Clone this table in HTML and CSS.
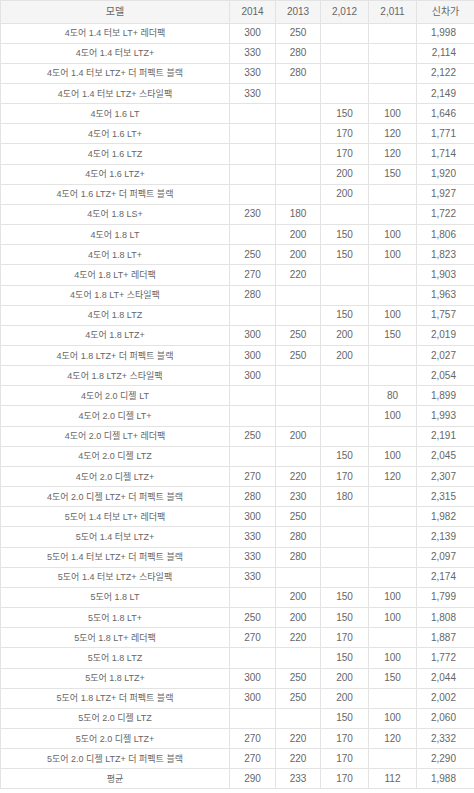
FILE: index.html
```
<!DOCTYPE html>
<html lang="ko">
<head>
<meta charset="utf-8">
<title>가격표</title>
<link rel="stylesheet" href="styles.css">
</head>
<body>
<table class="price-table">
<colgroup>
<col class="c-model"><col class="c-y"><col class="c-y2"><col class="c-y3"><col class="c-y3"><col class="c-new">
</colgroup>
<thead>
<tr><th>모델</th><th>2014</th><th>2013</th><th>2,012</th><th>2,011</th><th>신차가</th></tr>
</thead>
<tbody>
<tr><td class="model">4도어 1.4 터보 LT+ 레더팩</td><td>300</td><td>250</td><td></td><td></td><td class="num">1,998</td></tr>
<tr><td class="model">4도어 1.4 터보 LTZ+</td><td>330</td><td>280</td><td></td><td></td><td class="num">2,114</td></tr>
<tr><td class="model">4도어 1.4 터보 LTZ+ 더 퍼펙트 블랙</td><td>330</td><td>280</td><td></td><td></td><td class="num">2,122</td></tr>
<tr><td class="model">4도어 1.4 터보 LTZ+ 스타일팩</td><td>330</td><td></td><td></td><td></td><td class="num">2,149</td></tr>
<tr><td class="model">4도어 1.6 LT</td><td></td><td></td><td>150</td><td>100</td><td class="num">1,646</td></tr>
<tr><td class="model">4도어 1.6 LT+</td><td></td><td></td><td>170</td><td>120</td><td class="num">1,771</td></tr>
<tr><td class="model">4도어 1.6 LTZ</td><td></td><td></td><td>170</td><td>120</td><td class="num">1,714</td></tr>
<tr><td class="model">4도어 1.6 LTZ+</td><td></td><td></td><td>200</td><td>150</td><td class="num">1,920</td></tr>
<tr><td class="model">4도어 1.6 LTZ+ 더 퍼펙트 블랙</td><td></td><td></td><td>200</td><td></td><td class="num">1,927</td></tr>
<tr><td class="model">4도어 1.8 LS+</td><td>230</td><td>180</td><td></td><td></td><td class="num">1,722</td></tr>
<tr><td class="model">4도어 1.8 LT</td><td></td><td>200</td><td>150</td><td>100</td><td class="num">1,806</td></tr>
<tr><td class="model">4도어 1.8 LT+</td><td>250</td><td>200</td><td>150</td><td>100</td><td class="num">1,823</td></tr>
<tr><td class="model">4도어 1.8 LT+ 레더팩</td><td>270</td><td>220</td><td></td><td></td><td class="num">1,903</td></tr>
<tr><td class="model">4도어 1.8 LT+ 스타일팩</td><td>280</td><td></td><td></td><td></td><td class="num">1,963</td></tr>
<tr><td class="model">4도어 1.8 LTZ</td><td></td><td></td><td>150</td><td>100</td><td class="num">1,757</td></tr>
<tr><td class="model">4도어 1.8 LTZ+</td><td>300</td><td>250</td><td>200</td><td>150</td><td class="num">2,019</td></tr>
<tr><td class="model">4도어 1.8 LTZ+ 더 퍼펙트 블랙</td><td>300</td><td>250</td><td>200</td><td></td><td class="num">2,027</td></tr>
<tr><td class="model">4도어 1.8 LTZ+ 스타일팩</td><td>300</td><td></td><td></td><td></td><td class="num">2,054</td></tr>
<tr><td class="model">4도어 2.0 디젤 LT</td><td></td><td></td><td></td><td>80</td><td class="num">1,899</td></tr>
<tr><td class="model">4도어 2.0 디젤 LT+</td><td></td><td></td><td></td><td>100</td><td class="num">1,993</td></tr>
<tr><td class="model">4도어 2.0 디젤 LT+ 레더팩</td><td>250</td><td>200</td><td></td><td></td><td class="num">2,191</td></tr>
<tr><td class="model">4도어 2.0 디젤 LTZ</td><td></td><td></td><td>150</td><td>100</td><td class="num">2,045</td></tr>
<tr><td class="model">4도어 2.0 디젤 LTZ+</td><td>270</td><td>220</td><td>170</td><td>120</td><td class="num">2,307</td></tr>
<tr><td class="model">4도어 2.0 디젤 LTZ+ 더 퍼펙트 블랙</td><td>280</td><td>230</td><td>180</td><td></td><td class="num">2,315</td></tr>
<tr><td class="model">5도어 1.4 터보 LT+ 레더팩</td><td>300</td><td>250</td><td></td><td></td><td class="num">1,982</td></tr>
<tr><td class="model">5도어 1.4 터보 LTZ+</td><td>330</td><td>280</td><td></td><td></td><td class="num">2,139</td></tr>
<tr><td class="model">5도어 1.4 터보 LTZ+ 더 퍼펙트 블랙</td><td>330</td><td>280</td><td></td><td></td><td class="num">2,097</td></tr>
<tr><td class="model">5도어 1.4 터보 LTZ+ 스타일팩</td><td>330</td><td></td><td></td><td></td><td class="num">2,174</td></tr>
<tr><td class="model">5도어 1.8 LT</td><td></td><td>200</td><td>150</td><td>100</td><td class="num">1,799</td></tr>
<tr><td class="model">5도어 1.8 LT+</td><td>250</td><td>200</td><td>150</td><td>100</td><td class="num">1,808</td></tr>
<tr><td class="model">5도어 1.8 LT+ 레더팩</td><td>270</td><td>220</td><td>170</td><td></td><td class="num">1,887</td></tr>
<tr><td class="model">5도어 1.8 LTZ</td><td></td><td></td><td>150</td><td>100</td><td class="num">1,772</td></tr>
<tr><td class="model">5도어 1.8 LTZ+</td><td>300</td><td>250</td><td>200</td><td>150</td><td class="num">2,044</td></tr>
<tr><td class="model">5도어 1.8 LTZ+ 더 퍼펙트 블랙</td><td>300</td><td>250</td><td>200</td><td></td><td class="num">2,002</td></tr>
<tr><td class="model">5도어 2.0 디젤 LTZ</td><td></td><td></td><td>150</td><td>100</td><td class="num">2,060</td></tr>
<tr><td class="model">5도어 2.0 디젤 LTZ+</td><td>270</td><td>220</td><td>170</td><td>120</td><td class="num">2,332</td></tr>
<tr><td class="model">5도어 2.0 디젤 LTZ+ 더 퍼펙트 블랙</td><td>270</td><td>220</td><td>170</td><td></td><td class="num">2,290</td></tr>
<tr><td class="model">평균</td><td>290</td><td>233</td><td>170</td><td>112</td><td class="num">1,988</td></tr>
</tbody>
</table>
</body>
</html>
```
FILE: styles.css
```
html, body {
  margin: 0;
  padding: 0;
  background: #ffffff;
}
.price-table {
  width: 474px;
  table-layout: fixed;
  border-collapse: collapse;
  font-family: "Liberation Sans", "Noto Sans CJK KR", sans-serif;
  font-size: 10px;
  color: #666666;
}
.c-model { width: 229px; }
.c-y { width: 46px; }
.c-y2 { width: 45px; }
.c-y3 { width: 48px; }
.c-new { width: 58px; }
.price-table th,
.price-table td {
  border: 1px solid #e3e3e3;
  padding: 0;
  text-align: center;
  line-height: 12px;
  font-weight: normal;
  white-space: nowrap;
}
.price-table thead tr { height: 22.5px; }
.price-table thead th { background: #f5f5f5; }
.price-table tbody tr { height: 20.17px; }
.price-table td.model {
  font-size: 9px;
}
.price-table td.num {
  text-align: right;
  padding-right: 18px;
}
```
